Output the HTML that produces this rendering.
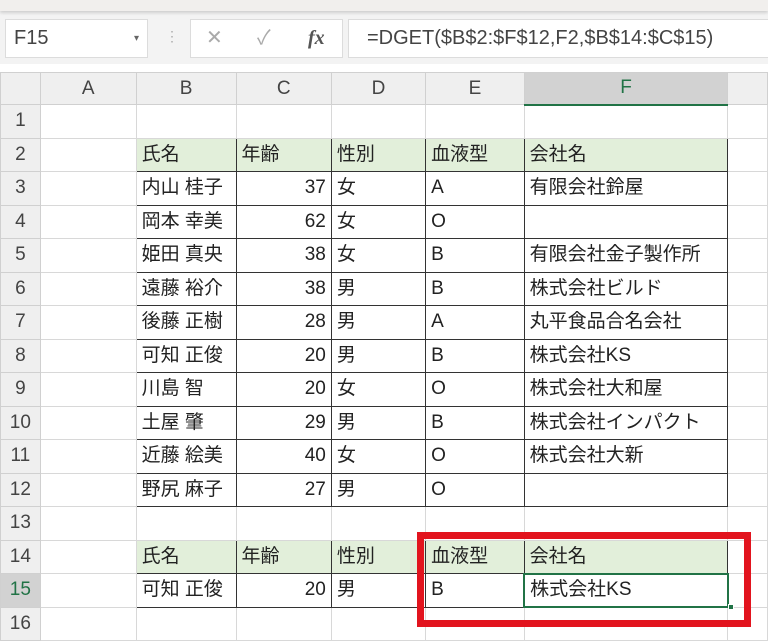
<!DOCTYPE html>
<html><head><meta charset="utf-8"><style>
*{margin:0;padding:0;box-sizing:border-box}
body{width:768px;height:634px;overflow:hidden;background:#fff;font-family:"Liberation Sans","Noto Sans CJK JP",sans-serif;position:relative}
.top{position:absolute;left:0;top:0;width:768px;height:64px;background:#f3f3f3}
.strip{position:absolute;left:0;top:0;width:768px;height:11px;background:#f1efed;box-shadow:0 2px 3px rgba(0,0,0,.15)}
.box{position:absolute;background:#fff;border:1px solid #dcdcdc;top:19px;height:39px;color:#444;font-size:20px;line-height:37px}
table{position:absolute;left:0;top:72px;border-collapse:collapse;table-layout:fixed;font-size:19px;color:#222}
td{height:33.5px;border:1px solid #d8d8d8;padding:0 5px;white-space:nowrap;overflow:hidden;line-height:20px;vertical-align:middle}
td span{display:inline-block;vertical-align:middle}
tr.h td{height:32px;background:#efefef;color:#444;text-align:center;border-color:#d0d0d0}
td.rh{background:#efefef;color:#444;text-align:center;padding:0;border-color:#d0d0d0}
td.d{border:1px solid #333}
td.g{background:#e2efda}
td.n{text-align:right}
</style></head><body>
<div class="top"></div><div class="strip"></div>
<div class="box" style="left:5px;width:143px;padding-left:8px">F15<span style="position:absolute;right:8px;font-size:10px;color:#666">▾</span></div>
<div style="position:absolute;left:165px;top:28px;color:#aaa;font-size:14px">⋮</div>
<div class="box" style="left:190px;width:153px;color:#aaa"><span style="position:absolute;left:15px">✕</span><span style="position:absolute;left:66px">✓</span><i style="position:absolute;left:117px;color:#555;font-family:'Liberation Serif',serif;font-weight:bold">fx</i></div>
<div class="box" style="left:348px;width:430px;padding-left:18px">=DGET($B$2:$F$12,F2,$B$14:$C$15)</div>
<table>
<colgroup><col style="width:40px"><col style="width:97px"><col style="width:100px"><col style="width:96px"><col style="width:95px"><col style="width:99px"><col style="width:204px"><col style="width:40px"></colgroup>
<tr class="h"><td style="background:#efefef"></td><td>A</td><td>B</td><td>C</td><td>D</td><td>E</td><td style="background:#d2d2d2;border-bottom:2px solid #217346;color:#217346">F</td><td></td></tr>
<tr><td class="rh">1</td><td></td><td></td><td></td><td></td><td></td><td></td><td></td></tr>
<tr><td class="rh">2</td><td></td><td class="d g">氏名</td><td class="d g">年齢</td><td class="d g">性別</td><td class="d g">血液型</td><td class="d g">会社名</td><td></td></tr>
<tr><td class="rh">3</td><td></td><td class="d">内山 桂子</td><td class="d n">37</td><td class="d">女</td><td class="d">A</td><td class="d">有限会社鈴屋</td><td></td></tr>
<tr><td class="rh">4</td><td></td><td class="d">岡本 幸美</td><td class="d n">62</td><td class="d">女</td><td class="d">O</td><td class="d"></td><td></td></tr>
<tr><td class="rh">5</td><td></td><td class="d">姫田 真央</td><td class="d n">38</td><td class="d">女</td><td class="d">B</td><td class="d">有限会社金子製作所</td><td></td></tr>
<tr><td class="rh">6</td><td></td><td class="d">遠藤 裕介</td><td class="d n">38</td><td class="d">男</td><td class="d">B</td><td class="d">株式会社ビルド</td><td></td></tr>
<tr><td class="rh">7</td><td></td><td class="d">後藤 正樹</td><td class="d n">28</td><td class="d">男</td><td class="d">A</td><td class="d">丸平食品合名会社</td><td></td></tr>
<tr><td class="rh">8</td><td></td><td class="d">可知 正俊</td><td class="d n">20</td><td class="d">男</td><td class="d">B</td><td class="d">株式会社KS</td><td></td></tr>
<tr><td class="rh">9</td><td></td><td class="d">川島 智</td><td class="d n">20</td><td class="d">女</td><td class="d">O</td><td class="d">株式会社大和屋</td><td></td></tr>
<tr><td class="rh">10</td><td></td><td class="d">土屋 肇</td><td class="d n">29</td><td class="d">男</td><td class="d">B</td><td class="d">株式会社インパクト</td><td></td></tr>
<tr><td class="rh">11</td><td></td><td class="d">近藤 絵美</td><td class="d n">40</td><td class="d">女</td><td class="d">O</td><td class="d">株式会社大新</td><td></td></tr>
<tr><td class="rh">12</td><td></td><td class="d">野尻 麻子</td><td class="d n">27</td><td class="d">男</td><td class="d">O</td><td class="d"></td><td></td></tr>
<tr><td class="rh">13</td><td></td><td></td><td></td><td></td><td></td><td></td><td></td></tr>
<tr><td class="rh">14</td><td></td><td class="d g">氏名</td><td class="d g">年齢</td><td class="d g">性別</td><td class="d g">血液型</td><td class="d g">会社名</td><td></td></tr>
<tr><td class="rh" style="background:#d2d2d2;color:#217346">15</td><td></td><td class="d">可知 正俊</td><td class="d n">20</td><td class="d">男</td><td class="d">B</td><td class="d" style="border:2px solid #217346">株式会社KS</td><td></td></tr>
<tr><td class="rh">16</td><td></td><td></td><td></td><td></td><td></td><td></td><td></td></tr>
</table>
<div style="position:absolute;left:728px;top:604px;width:6px;height:6px;background:#217346;border:1px solid #fff"></div>
<div style="position:absolute;left:417px;top:532px;width:334px;height:95px;border:7px solid #e2141e"></div>
</body></html>
